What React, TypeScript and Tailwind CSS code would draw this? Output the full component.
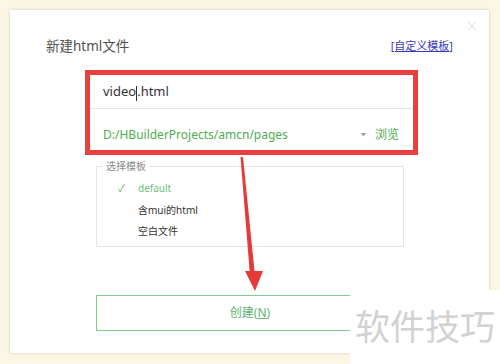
import { X } from "lucide-react";

const font = { fontFamily: '"Noto Sans", "Noto Sans CJK SC", sans-serif' };

export default function App() {
  return (
    <div
      className="relative w-[500px] h-[364px] overflow-hidden bg-[#fcf6e4] pt-[10px] pl-[10px]"
      style={font}
    >
      <div className="relative flex w-[479px] h-[343px] flex-col bg-white shadow-[0_0_3px_rgba(0,0,0,0.18)] pt-[26px]">
        <button className="absolute right-[10px] top-[9px] text-[#c8c8c8]">
          <X className="w-[14px] h-[14px]" strokeWidth={1.2} />
        </button>

        {/* title row */}
        <div className="flex h-[20px] items-center justify-between px-[36px]">
          <span className="text-[13.5px] text-[#505050]">新建html文件</span>
          <a className="text-[11px] text-[#3b3bbd] underline">[自定义模板]</a>
        </div>

        {/* highlighted inputs */}
        <div className="ml-[75px] mt-[14px] w-[333px] h-[85px] border-[5px] border-[#e7403f] flex flex-col">
          <div className="flex h-[34px] items-center border-b border-[#e6e6e6] px-[13px] text-[13px] text-[#333]">
            <span>video</span>
            <span className="inline-block w-px h-[15px] bg-[#333] mt-[3px]" />
            <span>.html</span>
          </div>
          <div className="flex flex-1 items-center px-[13px] pt-[10px] text-[12px] text-[#4cae50]">
            <span className="flex-1">D:/HBuilderProjects/amcn/pages</span>
            <svg width="5" height="4" viewBox="0 0 5 4" className="mr-[9px]">
              <polygon points="0,0 5,0 2.5,3.5" fill="#999" />
            </svg>
            <span className="mr-[1px]">浏览</span>
          </div>
        </div>

        {/* template chooser */}
        <fieldset className="ml-[86px] mt-[5px] w-[308px] h-[87px] border border-[#e6e6e6] px-[21px]">
          <legend className="ml-[-15px] px-[3px] text-[10px] leading-[12px] text-[#8a8a8a]">
            选择模板
          </legend>
          <ul className="mt-[8px] flex flex-col gap-[4px] text-[10px] leading-[17.5px]">
            <li className="flex items-center text-[#6cbf7a]">
              <span className="w-[20px] text-[#5aa86b]">✓</span>
              <span>default</span>
            </li>
            <li className="flex items-center text-[#333]">
              <span className="w-[20px]" />
              <span>含mui的html</span>
            </li>
            <li className="flex items-center text-[#333]">
              <span className="w-[20px]" />
              <span>空白文件</span>
            </li>
          </ul>
        </fieldset>

        {/* create button */}
        <button className="ml-[86px] mt-[48px] w-[308px] h-[36px] border border-[#80cc95] text-[12px] text-[#5bb46c]">
          创建(<span className="underline">N</span>)
        </button>
      </div>

      {/* annotation arrow */}
      <svg className="pointer-events-none absolute left-0 top-0" width="500" height="364">
        <polygon points="240.5,157 243,157 255,276 250,276" fill="#e53a3a" />
        <polygon points="245,271 263,271 255,291" fill="#e53a3a" />
      </svg>

      {/* watermark */}
      <div className="absolute left-[350px] top-[290px] flex w-[150px] h-[74px] items-center justify-center bg-white">
        <span className="text-[35px] text-[#d2d2d2]">软件技巧</span>
      </div>
    </div>
  );
}
